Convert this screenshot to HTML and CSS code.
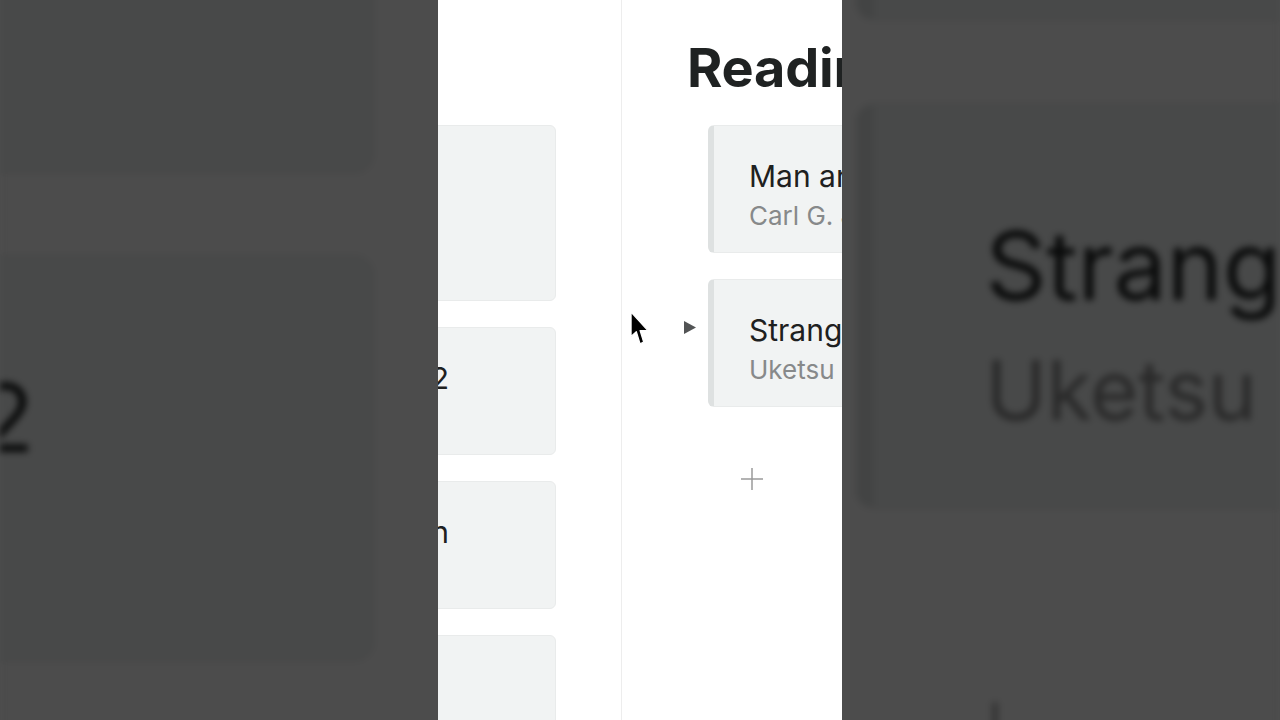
FILE: index.html
```html
<!DOCTYPE html>
<html lang="en">
<head>
<meta charset="utf-8">
<title>Reading board</title>
<link rel="stylesheet" href="styles.css">
</head>
<body>
<div class="stage">
  <div class="frame backdrop" aria-hidden="true">
    <div class="board">
      <div class="col col-left">
        <div class="card card-tall card-far"><div class="title">Thinking, Fast and Slow</div><div class="author">Daniel Kahneman</div></div>
        <div class="card"><div class="title">Volume 2</div><div class="author">Author</div></div>
        <div class="card"><div class="title">Frankenstein</div><div class="author">Mary Shelley</div></div>
        <div class="card card-far"><div class="title">Dune</div><div class="author">Frank Herbert</div></div>
      </div>
      <div class="col col-right">
        <h1 class="heading">Reading</h1>
        <div class="card card-strip"><div class="title">Man and His Symbols</div><div class="author">Carl G. Jung</div></div>
        <div class="card card-strip"><div class="title">Strange Pictures</div><div class="author">Uketsu</div></div>
        <div class="add"><svg class="plus" viewBox="0 0 24 24" width="24" height="24"><path d="M12 1V23M1 12H23" stroke="#9a9a9a" stroke-width="1.5" fill="none"/></svg></div>
      </div>
    </div>
  </div>

  <div class="frame main">
    <div class="board">
      <div class="col col-left">
        <div class="card card-tall card-far"><div class="title">Thinking, Fast and Slow</div><div class="author">Daniel Kahneman</div></div>
        <div class="card"><div class="title">Volume 2</div><div class="author">Author</div></div>
        <div class="card"><div class="title">Frankenstein</div><div class="author">Mary Shelley</div></div>
        <div class="card card-far"><div class="title">Dune</div><div class="author">Frank Herbert</div></div>
      </div>
      <div class="col col-right">
        <h1 class="heading">Reading</h1>
        <div class="card card-strip"><div class="title">Man and His Symbols</div><div class="author">Carl G. Jung</div></div>
        <div class="card card-strip card-hover">
          <svg class="handle" viewBox="0 0 12 13" width="12" height="13"><polygon points="0,0 12,6.5 0,13" fill="#525455"/></svg>
          <div class="title">Strange Pictures</div><div class="author">Uketsu</div>
        </div>
        <div class="add"><svg class="plus" viewBox="0 0 24 24" width="24" height="24"><path d="M12 1V23M1 12H23" stroke="#9a9a9a" stroke-width="1.5" fill="none"/></svg></div>
      </div>
    </div>
    <svg class="cursor" viewBox="-1 -1 19 33" width="20" height="35"><path d="M0 0 L0 23 L5 18.5 L8.5 30 L12 28.5 L8.6 17.5 L16 17.5 Z" fill="#000" stroke="#fff" stroke-width="1.2" stroke-linejoin="round"/></svg>
  </div>
</div>
</body>
</html>
```

FILE: styles.css
```css
* { box-sizing: border-box; }

html, body {
  margin: 0;
  padding: 0;
  width: 1280px;
  height: 720px;
  overflow: hidden;
  background: #4d4d4d;
  font-family: Inter, "Liberation Sans", Arial, sans-serif;
}

.stage {
  width: 1280px;
  height: 720px;
  display: grid;
  overflow: hidden;
}

.frame {
  grid-area: 1 / 1;
  justify-self: center;
  align-self: center;
  width: 404px;
  height: 720px;
  overflow: hidden;
  background: #ffffff;
  position: relative;
}

.backdrop {
  transform: scale(3.17);
  transform-origin: 50% 50%;
  filter: brightness(0.3) blur(1.1px);
}

.board {
  display: flex;
  height: 100%;
}

.col {
  display: flex;
  flex-direction: column;
  flex: none;
}

.col-left {
  width: 600px;
  margin-left: -482px;
  padding-top: 125px;
  gap: 26px;
}

.col-right {
  width: 360px;
  margin-left: 65px;
  border-left: 1px solid #ededed;
  padding-left: 65px;
  padding-top: 35px;
}

.heading {
  margin: 0 0 25px 0;
  font-size: 54px;
  line-height: 65px;
  font-weight: 700;
  color: #1f2222;
  letter-spacing: -0.2px;
  white-space: nowrap;
}

.card {
  flex: none;
  height: 128px;
  background: #f1f3f3;
  border: 1px solid #e9ebeb;
  border-radius: 6px;
  padding: 32px 106px 0 20px;
  text-align: right;
  white-space: nowrap;
}

.card-tall { height: 176px; }

.col-left .card-far { padding-right: 220px; }

.col-left .author { padding-right: 160px; }

.card-strip {
  width: 300px;
  margin-left: 21px;
  margin-bottom: 26px;
  border-left: 6px solid #dee1e1;
  padding: 32px 10px 0 35px;
  text-align: left;
  position: relative;
}

.title {
  font-size: 30px;
  line-height: 36px;
  color: #1e2020;
}

.author {
  margin-top: 6px;
  font-size: 26px;
  line-height: 31px;
  color: #87898a;
}

.handle {
  position: absolute;
  left: -30px;
  top: 41px;
  display: block;
}

.add {
  margin-top: 34px;
  padding-left: 53px;
}

.plus { display: block; }

.cursor {
  position: absolute;
  left: 192px;
  top: 311px;
  display: block;
}
```
